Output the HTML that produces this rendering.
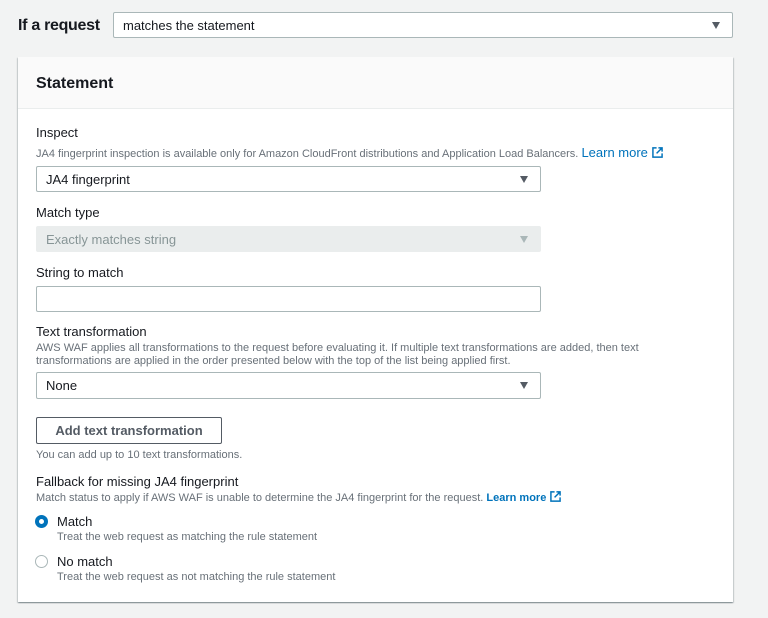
<!DOCTYPE html>
<html><head><style>
*{margin:0;padding:0;box-sizing:border-box}
body{width:768px;height:618px;background:#f2f3f3;font-family:"Liberation Sans",sans-serif;color:#16191f;position:relative;overflow:hidden}
.a{position:absolute;white-space:nowrap}
.sel{position:absolute;background:#fff;border:1px solid #aab7b8;border-radius:2px}
.sel span{position:absolute;left:9px;top:5px;font-size:13px}
.tri{position:absolute;right:12px;top:9px;width:0;height:0;border-left:4px solid transparent;border-right:4px solid transparent;border-top:7px solid #545b64}
.lab{font-size:13px;color:#16191f}
.help{font-size:11px;color:#687078}
.ext{display:inline-block;width:11px;height:11px;vertical-align:-1px;margin-left:4px}
</style></head><body>
<div class="a" style="left:18px;top:17px;font-size:16px;font-weight:bold;letter-spacing:-0.3px">If a request</div>
<div class="sel" style="left:113px;top:12px;width:620px;height:26px"><span style="top:5px">matches the statement</span><div class="tri"></div></div>

<div class="a" style="left:18px;top:57px;width:715px;height:545px;background:#fff;box-shadow:0 1px 1px rgba(0,28,36,.3),1px 1px 1px rgba(0,28,36,.15),-1px 1px 1px rgba(0,28,36,.15)"></div>
<div class="a" style="left:18px;top:57px;width:715px;height:52px;background:#fafafa;border-bottom:1px solid #eaeded"></div>
<div class="a" style="left:36px;top:75px;font-size:16px;font-weight:bold">Statement</div>

<div class="a lab" style="left:36px;top:125px">Inspect</div>
<div class="a help" style="left:36px;top:145px">JA4 fingerprint inspection is available only for Amazon CloudFront distributions and Application Load Balancers. <span style="color:#0073bb;font-size:13px">Learn more<svg class="ext" viewBox="0 0 12 12"><path d="M5 1H1v10h10V7M7 1h4v4M11 1L5 7" fill="none" stroke="#0073bb" stroke-width="1.6"/></svg></span></div>
<div class="sel" style="left:36px;top:166px;width:505px;height:26px"><span>JA4 fingerprint</span><div class="tri"></div></div>

<div class="a lab" style="left:36px;top:205px">Match type</div>
<div class="sel" style="left:36px;top:226px;width:505px;height:26px;background:#eaeded;border-color:#eaeded"><span style="color:#879596">Exactly matches string</span><div class="tri" style="border-top-color:#aab7b8"></div></div>

<div class="a lab" style="left:36px;top:265px">String to match</div>
<div class="sel" style="left:36px;top:286px;width:505px;height:26px"></div>

<div class="a lab" style="left:36px;top:324px">Text transformation</div>
<div class="a help" style="left:36px;top:342px;line-height:13px">AWS WAF applies all transformations to the request before evaluating it. If multiple text transformations are added, then text<br>transformations are applied in the order presented below with the top of the list being applied first.</div>
<div class="sel" style="left:36px;top:372px;width:505px;height:27px"><span>None</span><div class="tri"></div></div>

<div class="a" style="left:36px;top:417px;width:186px;height:27px;border:1px solid #545b64;border-radius:2px;background:#fff;font-size:13px;font-weight:bold;color:#545b64;text-align:center;line-height:25px">Add text transformation</div>
<div class="a help" style="left:36px;top:449px">You can add up to 10 text transformations.</div>

<div class="a lab" style="left:36px;top:474px">Fallback for missing JA4 fingerprint</div>
<div class="a help" style="left:36px;top:491px">Match status to apply if AWS WAF is unable to determine the JA4 fingerprint for the request. <b style="color:#0073bb">Learn more</b><svg class="ext" viewBox="0 0 12 12"><path d="M5 1H1v10h10V7M7 1h4v4M11 1L5 7" fill="none" stroke="#0073bb" stroke-width="1.6"/></svg></div>

<div class="a" style="left:35px;top:515px;width:13px;height:13px;border-radius:50%;border:4px solid #0073bb;background:#fff"></div>
<div class="a lab" style="left:57px;top:514px">Match</div>
<div class="a help" style="left:57px;top:531px">Treat the web request as matching the rule statement</div>
<div class="a" style="left:35px;top:555px;width:13px;height:13px;border-radius:50%;border:1px solid #aab7b8;background:#fff"></div>
<div class="a lab" style="left:57px;top:554px">No match</div>
<div class="a help" style="left:57px;top:571px">Treat the web request as not matching the rule statement</div>
</body></html>
